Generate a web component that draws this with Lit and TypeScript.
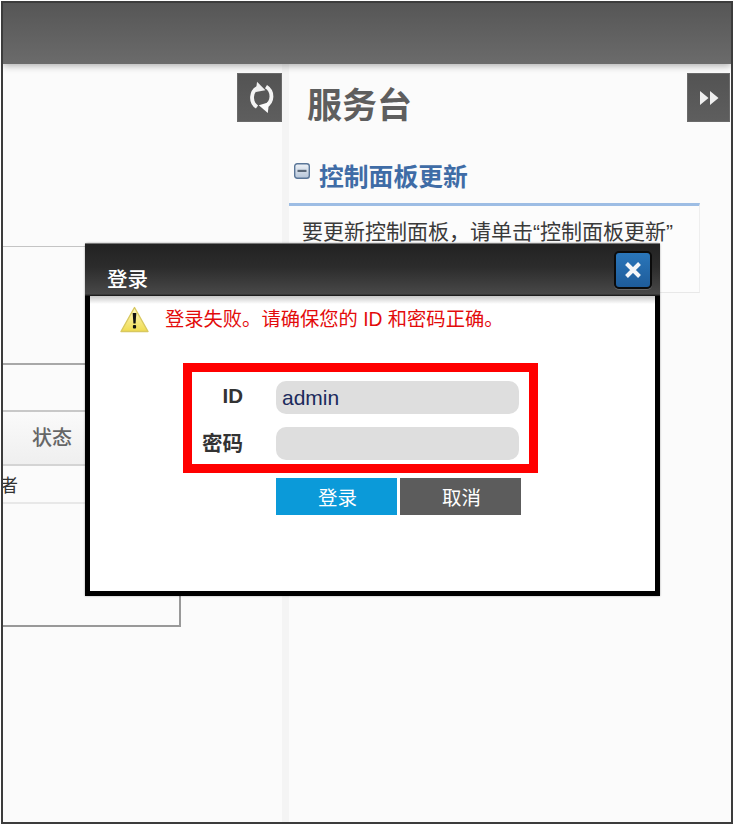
import { LitElement, html, css } from "lit";
import { customElement } from "lit/decorators.js";

@customElement("app-root")
export class AppRoot extends LitElement {
  static styles = css`
    :host { display: block; width: 734px; height: 825px; background: #fff; padding: 1px; box-sizing: border-box; overflow: hidden;
      font-family: "Liberation Sans", "Noto Sans CJK SC", sans-serif; }
    * { box-sizing: border-box; }
    .frame { position: relative; width: 732px; height: 823px; border: 2px solid #3c3c3c; background: #fbfbfb; display: flex; flex-direction: column; overflow: hidden; }
    .header { height: 61px; flex: none; background: linear-gradient(#565656, #6b6b6b); box-shadow: 0 2px 7px rgba(0,0,0,.3); position: relative; z-index: 1; }
    .main { flex: 1; display: flex; min-height: 0; }
    .left { width: 279px; flex: none; padding-top: 9px; display: flex; flex-direction: column; align-items: flex-end; }
    .divider { width: 7px; flex: none; background: #f4f4f4; }
    .right { flex: 1; padding-top: 9px; min-width: 0; }
    .tool { width: 45px; height: 49px; flex: none; background: linear-gradient(#535353, #5e5e5e); border: 1px solid #6a6a6a; display: flex; align-items: center; justify-content: center; }
    .panel { align-self: flex-start; width: 178px; height: 381px; margin-top: 124px; border-top: 1px solid #c4c4c4; border-right: 2px solid #999; border-bottom: 2px solid #999; padding-top: 116px; }
    .band { height: 47px; border-top: 2px solid #a8a8a8; }
    .thead { height: 56px; border-top: 2px solid #c8c8c8; border-bottom: 2px solid #d4d4d4; background: linear-gradient(#fafafa, #efefef); display: flex; align-items: center; padding: 0 0 4px 29px; font-size: 20px; font-weight: 500; color: #666; }
    .row { height: 38px; border-bottom: 2px solid #e8e8e8; font-size: 18px; color: #333; display: flex; align-items: center; }
    .clip { width: 15px; overflow: hidden; display: flex; justify-content: flex-end; white-space: nowrap; }
    .title-row { display: flex; justify-content: space-between; align-items: flex-start; }
    h1 { margin: 10px 0 0 18px; font-size: 35px; line-height: 46px; font-weight: 700; color: #5e5e5e; }
    .tool.next { width: 43px; margin-right: 1px; }
    .sec { display: flex; align-items: flex-start; margin: 34px 0 0 5px; height: 40px; }
    .sec svg { margin-right: 9px; flex: none; }
    h2 { margin: 0; font-size: 24.800px; line-height: 30px; font-weight: 700; color: #3f6ca6; }
    .desc { width: 411px; height: 90px; border-top: 3px solid #9dbde4; border-right: 1px solid #eee; border-bottom: 1px solid #e8e8e8; background: #fcfcfc; padding: 11px 0 0 13px; font-size: 21px; line-height: 30px; color: #3a3a3a; white-space: nowrap; overflow: hidden; }
    .dialog { position: absolute; left: 82px; top: 240px; width: 575px; height: 353px; z-index: 2; display: flex; flex-direction: column; background: #000; border-radius: 3px 3px 0 0; box-shadow: 0 0 2px rgba(0,0,0,.4); }
    .d-title { height: 53px; flex: none; background: linear-gradient(#222 0, #2c2c2c 45%, #484848 96%, #111 100%); border-top: 1px solid #777; display: flex; align-items: center; justify-content: space-between; padding: 0 8px 0 22px; color: #fff; }
    .d-title span { font-size: 20.500px; font-weight: 500; margin-top: 16px; }
    .close { width: 38px; height: 38px; padding: 0; border: 2px solid #0b0b0b; border-radius: 5px; background: linear-gradient(#2a76ba, #1e5c9a); box-shadow: 0 1px 0 #666; display: flex; align-items: center; justify-content: center; margin-top: -1px; }
    .d-body { flex: 1; margin: 0 5px 5px; background: linear-gradient(#c8c8c8 0, #fff 8px); padding: 10px 0 0 0; }
    .msg { display: flex; align-items: flex-start; padding-left: 30px; height: 57px; color: #e30b0b; font-size: 19.300px; line-height: 28px; }
    .msg svg { flex: none; margin-right: 16px; }
    .hl { width: 355px; height: 110px; margin-left: 93px; border: 9px solid #f00; background: #fff; padding-top: 9px; display: grid; grid-template-columns: 51px 243px; column-gap: 33px; row-gap: 13px; grid-auto-rows: 33px; align-items: center; }
    label { text-align: right; font-size: 20.500px; line-height: 30px; font-weight: 700; color: #333; }
    label.id { margin-bottom: 4px; }
    input { width: 243px; height: 33px; border: 0; outline: 0; border-radius: 10px; background: #dedede; padding: 1px 6px 0; font: 21px "Liberation Sans", sans-serif; color: #1b2a5c; }
    .btns { display: flex; gap: 3px; margin: 5px 0 0 186px; }
    button.b { width: 121px; height: 37px; border: 0; padding: 0 0 0 2px; color: #fff; font: 19.500px "Liberation Sans", "Noto Sans CJK SC", sans-serif; }
    .ok { background: #0b9ad9; }
    .no { background: #5c5c5c; }
  `;

  render() {
    return html`
      <div class="frame">
        <div class="header"></div>
        <div class="main">
          <div class="left">
            <div class="tool">
              <svg width="36" height="36" viewBox="-1.500 1 30 30" fill="none">
                <path d="M12.500 7 A9.500 9.500 0 0 0 11 23.500" stroke="#f4f4f4" stroke-width="3.200"/>
                <path d="M18.500 6.500 A9.500 9.500 0 0 1 18 23" stroke="#f4f4f4" stroke-width="3.200"/>
                <path d="M11 2.500 L18 9.500 L10 11 Z" fill="#f0f0f0"/>
                <path d="M20 28.500 L12.500 22 L21 19.500 Z" fill="#fafafa"/>
              </svg>
            </div>
            <div class="panel">
              <div class="band"></div>
              <div class="thead">状态</div>
              <div class="row"><div class="clip">管理者</div></div>
            </div>
          </div>
          <div class="divider"></div>
          <div class="right">
            <div class="title-row">
              <h1>服务台</h1>
              <div class="tool next">
                <svg width="20" height="16" viewBox="0 0 20 16"><path d="M1 1 L9.500 8 L1 15 Z M11 1 L19.500 8 L11 15 Z" fill="#f0f0f0"/></svg>
              </div>
            </div>
            <div class="sec">
              <svg width="16" height="16" viewBox="0 0 16 16">
                <defs><linearGradient id="mi" x1="0" y1="0" x2="0" y2="1"><stop offset="0" stop-color="#eef2f7"/><stop offset="1" stop-color="#b4c4d8"/></linearGradient></defs>
                <rect x=".7" y=".7" width="14.600" height="14.600" rx="2.500" fill="url(#mi)" stroke="#5a7698" stroke-width="1.400"/>
                <rect x="3.500" y="6.800" width="9" height="2.200" fill="#5a6878"/>
              </svg>
              <h2>控制面板更新</h2>
            </div>
            <div class="desc">要更新控制面板，请单击“控制面板更新”</div>
          </div>
        </div>

        <div class="dialog">
          <div class="d-title">
            <span>登录</span>
            <button class="close" aria-label="关闭">
              <svg width="20" height="20" viewBox="0 0 20 20"><path d="M3.500 3.500 L16.500 16.500 M16.500 3.500 L3.500 16.500" stroke="#f4f6f8" stroke-width="4"/></svg>
            </button>
          </div>
          <div class="d-body">
            <div class="msg">
              <svg width="29" height="27" viewBox="0 0 29 27">
                <defs><linearGradient id="wa" x1="0" y1="0" x2="0" y2="1"><stop offset="0" stop-color="#fff9c4"/><stop offset="1" stop-color="#f0dc50"/></linearGradient></defs>
                <path d="M14.500 1.500 L28 25.500 H1 Z" fill="url(#wa)" stroke="#d8c860" stroke-width="1.400" stroke-linejoin="round"/>
                <path d="M12.700 7 H16.300 L15.600 17.500 H13.400 Z" fill="#111"/>
                <rect x="12.900" y="19" width="3.200" height="3.600" rx="1" fill="#111"/>
              </svg>
              <span>登录失败。请确保您的 ID 和密码正确。</span>
            </div>
            <div class="hl">
              <label class="id">ID</label><input .value=${"admin"} />
              <label>密码</label><input type="password" />
            </div>
            <div class="btns">
              <button class="b ok">登录</button>
              <button class="b no">取消</button>
            </div>
          </div>
        </div>
      </div>
    `;
  }
}
